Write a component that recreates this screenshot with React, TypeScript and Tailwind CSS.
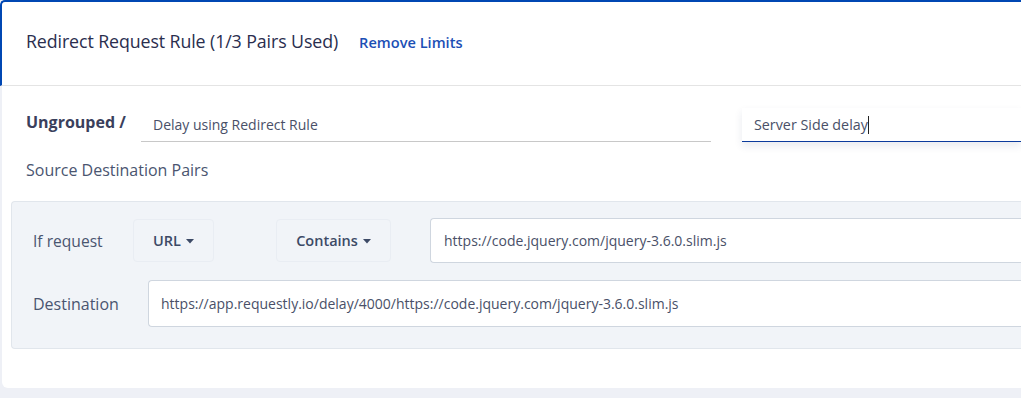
import React from "react";

function Caret() {
  return (
    <svg width="8" height="5" viewBox="0 0 8 5" className="ml-[5px] mt-[1px]">
      <path d="M0 0 L8 0 L4 4.5 Z" fill="#3c4a66" />
    </svg>
  );
}

export default function App() {
  return (
    <div
      className="w-[1021px] h-[398px] bg-[#eef0f6] overflow-hidden"
      style={{ fontFamily: '"Open Sans", "Noto Sans", sans-serif' }}
    >
      <div className="h-[86px] bg-white border-t-2 border-l-2 border-[#0047b3] rounded-tl-[5px] border-b border-b-[#e4e4e4] flex items-center pl-[24px] pb-[4px]">
        <span className="text-[17.8px] font-medium text-[#2a2e4e] tracking-[-0.1px]">
          Redirect Request Rule (1/3 Pairs Used)
        </span>
        <span className="ml-[21px] text-[14.6px] font-semibold text-[#1c4fb5] mt-[2px]">
          Remove Limits
        </span>
      </div>
      <div className="ml-[2px] h-[302px] bg-white rounded-bl-[6px] pt-[22px]">
        <div className="flex items-end h-[34px] pl-[24px]">
          <span className="text-[16px] font-bold text-[#3a3f5c] pb-[8px] w-[115px]">
            Ungrouped /
          </span>
          <div className="w-[570px] h-[34px] border-b border-[#c8c8c8] flex items-center pl-[12px] text-[14px] text-[#495068]">
            Delay using Redirect Rule
          </div>
          <div className="ml-[31px] flex-1 h-[34px] border-b border-[#0b3b9c] flex items-center pl-[12px] text-[14.3px] text-[#495068] shadow-[0_4px_8px_rgba(30,50,100,0.10)]">
            Server Side delay
            <span className="inline-block w-px h-[18px] bg-[#222]" />
          </div>
        </div>
        <div className="pl-[24px] mt-[16px] text-[16px] leading-[24px] text-[#4a5570]">
          Source Destination Pairs
        </div>
        <div className="ml-[9px] mt-[19px] h-[148px] bg-[#f1f4f8] border border-[#e1e6ec] rounded-l-[4px] border-r-0 pt-[16px] pl-[21px] flex flex-col gap-[17px]">
          <div className="flex items-center h-[45px]">
            <span className="w-[100px] text-[15.6px] text-[#4a5570] pt-[2px]">If request</span>
            <div className="w-[81px] h-[43px] border border-[#e9edf3] rounded-[4px] flex items-center justify-center text-[14.5px] font-semibold text-[#3c4a66]">
              URL
              <Caret />
            </div>
            <div className="ml-[62px] w-[115px] h-[43px] border border-[#e9edf3] rounded-[4px] flex items-center justify-center text-[14.5px] font-semibold text-[#3c4a66]">
              Contains
              <Caret />
            </div>
            <div className="ml-[39px] flex-1 h-[45px] bg-white border border-[#cfd6df] border-r-0 rounded-l-[4px] flex items-center pl-[13px] text-[14px] text-[#495068]">
              https://code.jquery.com/jquery-3.6.0.slim.js
            </div>
          </div>
          <div className="flex items-center h-[47px]">
            <span className="w-[115px] text-[16px] text-[#4a5570]">Destination</span>
            <div className="flex-1 h-[47px] bg-white border border-[#cfd6df] border-r-0 rounded-l-[4px] flex items-center pl-[12px] text-[14px] text-[#495068]">
              https://app.requestly.io/delay/4000/https://code.jquery.com/jquery-3.6.0.slim.js
            </div>
          </div>
        </div>
      </div>
    </div>
  );
}
